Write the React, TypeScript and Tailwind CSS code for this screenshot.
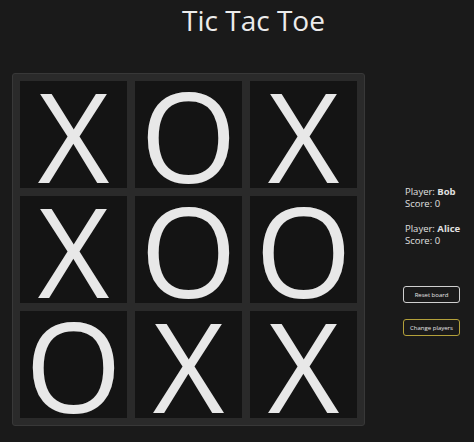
import React from "react";

const board = ["X", "O", "X", "X", "O", "O", "O", "X", "X"];

export default function App() {
  return (
    <div
      className="min-h-[442px] w-full bg-[#1a1a1a] text-[#e6e6e6]"
      style={{ fontFamily: '"Open Sans", "Noto Sans", sans-serif' }}
    >
      <div className="flex justify-center pl-[33px]">
        <h1 className="m-0 text-[28px] font-normal leading-[41px] text-[#ececec]">Tic Tac Toe</h1>
      </div>
      <div className="mt-[32px] flex items-start">
        <div className="ml-[12px] grid grid-cols-[107px_107px_107px] gap-[8px] rounded-[3px] border border-[#383838] bg-[#2a2a2a] p-[7px]">
          {board.map((v, i) => (
            <div
              key={i}
              className="flex h-[107px] w-[107px] items-start justify-center overflow-hidden bg-[#141414] text-[124px] leading-[107px] text-[#e8e8e8]"
            >
              {v}
            </div>
          ))}
        </div>
        <div className="ml-[38px] mt-[113px] flex flex-col">
          <div className="pl-[2px] text-[9.5px] leading-[12px] text-[#e0e0e0]">
            <div>
              Player: <span className="font-bold">Bob</span>
            </div>
            <div>Score: 0</div>
          </div>
          <div className="mt-[13px] pl-[2px] text-[9.5px] leading-[12px] text-[#e0e0e0]">
            <div>
              Player: <span className="font-bold">Alice</span>
            </div>
            <div>Score: 0</div>
          </div>
          <button className="mt-[39px] flex h-[17px] w-[57px] items-center justify-center rounded-[3px] border border-[#cfcfcf] bg-[#1a1a1a] text-[6px] leading-none text-[#e6e6e6]">
            Reset board
          </button>
          <button className="mt-[16px] flex h-[17px] w-[57px] items-center justify-center rounded-[3px] border border-[#b3a03a] bg-[#1a1a1a] text-[6px] leading-none text-[#e6e6e6]">
            Change players
          </button>
        </div>
      </div>
    </div>
  );
}
